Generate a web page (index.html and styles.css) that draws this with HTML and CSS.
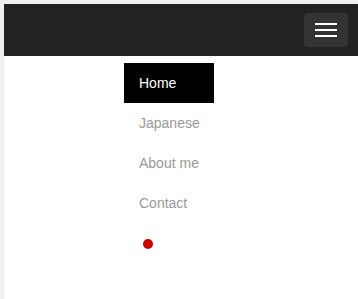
FILE: index.html
```html
<!DOCTYPE html>
<html lang="en">
<head>
    <meta charset="UTF-8">
    <meta name="viewport" content="width=device-width, initial-scale=1.0">
    <title>Home</title>
    <link rel="stylesheet" href="styles.css">
</head>
<body>
    <div class="page">
        <nav class="navbar">
            <button class="menu-toggle" aria-label="Menu">
                <span class="bar"></span>
                <span class="bar"></span>
                <span class="bar"></span>
            </button>
        </nav>
        <ul class="menu">
            <li><a href="#" class="active">Home</a></li>
            <li><a href="#">Japanese</a></li>
            <li><a href="#">About me</a></li>
            <li><a href="#">Contact</a></li>
            <li class="dot-item"><span class="dot"></span></li>
        </ul>
    </div>
</body>
</html>
```

FILE: styles.css
```css
body {
    font-family: "Liberation Sans", Arial, sans-serif;
    margin: 0;
    padding: 4px 0 0 4px;
    background-color: #f0f0f0;
}
.page {
    background-color: #fff;
    min-height: 295px;
}
.navbar {
    background-color: #222;
    height: 52px;
    display: flex;
    justify-content: flex-end;
    align-items: center;
    padding-right: 10px;
}
.menu-toggle {
    width: 44px;
    height: 34px;
    background-color: #333;
    border: none;
    border-radius: 4px;
    display: flex;
    flex-direction: column;
    justify-content: center;
    align-items: center;
    gap: 4px;
    padding: 0;
}
.menu-toggle .bar {
    display: block;
    width: 22px;
    height: 2px;
    background-color: #fff;
}
.menu {
    list-style: none;
    margin: 7px 0 0 120px;
    padding: 0;
    width: 90px;
}
.menu a {
    display: block;
    height: 40px;
    line-height: 40px;
    padding-left: 15px;
    font-size: 14px;
    color: #999;
    text-decoration: none;
}
.menu a.active {
    background-color: #000;
    color: #fff;
}
.dot-item {
    padding: 16px 0 0 19px;
}
.dot {
    display: block;
    width: 10px;
    height: 10px;
    border-radius: 50%;
    background-color: #c00;
}
```
